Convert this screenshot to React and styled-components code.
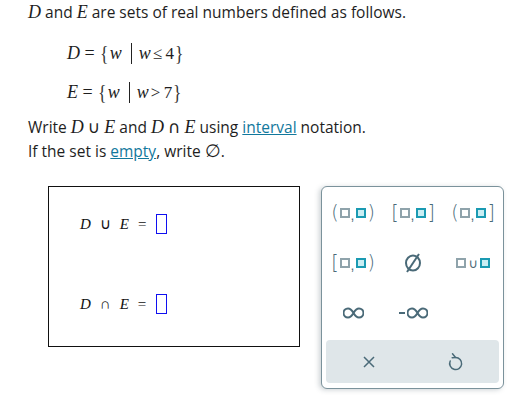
import React from "react";
import styled, { createGlobalStyle } from "styled-components";

const Global = createGlobalStyle`
  body {
    margin: 0;
    background: #fff;
    font-family: "Open Sans", "Liberation Sans", sans-serif;
    color: #1e1e1e;
  }
`;

const Page = styled.div`
  width: 521px;
  height: 407px;
  padding: 0 0 0 28px;
  box-sizing: border-box;
`;

const Line = styled.p`
  margin: 0;
  font-size: 15.5px;
  line-height: 24px;
`;

const M = styled.span`
  font-family: "Liberation Serif", serif;
  font-style: ${(p) => (p.$up ? "normal" : "italic")};
  font-size: 18px;
`;

const Op = styled.span`
  font-family: "DejaVu Sans", sans-serif;
  font-size: 17px;
`;

const Defs = styled.div`
  margin: 18px 0 0 39px;
  display: flex;
  flex-direction: column;
  gap: 16px;
`;

const Def = styled.div`
  display: flex;
  align-items: center;
  height: 23px;
  font-family: "Liberation Serif", serif;
  font-size: 17px;
`;

const Brace = styled.span`
  font-size: 22px;
  color: #333;
  line-height: 1;
  transform: scaleX(0.8);
  margin-top: -2px;
`;

const Bar = styled.span`
  display: inline-block;
  width: 1px;
  height: 21px;
  background: #222;
  margin: 0 7px 0 9px;
`;

const Rel = styled.span`
  font-family: "Liberation Serif", serif;
  margin-left: 2px;
`;

const Prompt = styled.div`
  margin-top: 11px;
`;

const Link = styled.a`
  color: #12789c;
  text-decoration: underline;
`;

const Work = styled.div`
  display: flex;
  align-items: flex-start;
  margin: 23px 0 0 20px;
  gap: 21px;
`;

const AnswerBox = styled.div`
  width: 252px;
  height: 161px;
  box-sizing: border-box;
  border: 1px solid #111;
  padding: 27px 0 0 31px;
  display: flex;
  flex-direction: column;
  gap: 60px;
`;

const Eq = styled.div`
  display: flex;
  align-items: center;
  height: 20px;
  font-family: "Liberation Serif", serif;
  font-size: 15px;
  color: #111;
`;

const Sym = styled.span`
  font-style: ${(p) => (p.$it ? "italic" : "normal")};
  margin-right: ${(p) => p.$mr || 9}px;
`;

const Slot = styled.span`
  display: inline-block;
  width: 11px;
  height: 20px;
  box-sizing: border-box;
  border: 1px solid #1010f0;
`;

const Palette = styled.div`
  width: 183px;
  height: 203px;
  box-sizing: border-box;
  border: 1px solid #7b929b;
  border-radius: 6px;
  box-shadow: -2px 1px 5px rgba(60, 80, 90, 0.25);
  padding: 1px 4px 5px 4px;
  display: flex;
  flex-direction: column;
  background: #fff;
`;

const Grid = styled.div`
  display: grid;
  grid-template-columns: repeat(3, 60px);
  grid-auto-rows: 50px;
  margin-left: -3px;
`;

const Key = styled.div`
  display: flex;
  align-items: center;
  justify-content: center;
  color: #4a6a78;
  font-family: "Liberation Sans", sans-serif;
`;

const Bracket = styled.span`
  font-size: 19px;
  line-height: 1;
  color: #4a6a78;
  font-family: "DejaVu Sans", sans-serif;
  font-weight: 300;
  margin-top: -2px;
`;

const Box = styled.span`
  display: inline-block;
  width: 10px;
  height: 10px;
  box-sizing: border-box;
  border: 2px solid ${(p) => (p.$on ? "#1a9ab2" : "#8fa3ab")};
  background: ${(p) => (p.$on ? "#c9eef4" : "#fff")};
  margin: 0 1px;
`;

const Comma = styled.span`
  font-size: 14px;
  margin: 3px 1px 0 0;
  color: #4a6a78;
`;

const Cup = styled.span`
  font-size: 13px;
  margin: 0 1px;
  color: #4a6a78;
  font-family: "DejaVu Sans", sans-serif;
`;

const Minus = styled.span`
  display: inline-block;
  width: 6px;
  height: 2px;
  background: #4a6a78;
  margin-right: 2px;
`;

const Actions = styled.div`
  margin-top: auto;
  height: 43px;
  background: #dfe6e9;
  border-radius: 4px;
  display: grid;
  grid-template-columns: 86px 86px;
  align-items: center;
  justify-items: center;
`;

const Interval = ({ l, r }) => (
  <Key>
    <Bracket>{l}</Bracket>
    <Box />
    <Comma>,</Comma>
    <Box $on />
    <Bracket>{r}</Bracket>
  </Key>
);

const EmptySet = () => (
  <svg width="20" height="22" viewBox="0 0 20 22">
    <ellipse cx="10" cy="11" rx="7" ry="7.5" fill="none" stroke="#4a6a78" strokeWidth="2" />
    <line x1="16" y1="2" x2="4" y2="20" stroke="#4a6a78" strokeWidth="2" />
  </svg>
);

const Infinity = () => (
  <svg width="21" height="12" viewBox="0 0 21 12">
    <path
      d="M10.5 6 C8.5 2.5 6.5 1.5 5 1.5 A4.5 4.5 0 0 0 5 10.5 C6.5 10.5 8.5 9.5 10.5 6 C12.5 2.5 14.5 1.5 16 1.5 A4.5 4.5 0 0 1 16 10.5 C14.5 10.5 12.5 9.5 10.5 6 Z"
      fill="none"
      stroke="#4a6a78"
      strokeWidth="2"
    />
  </svg>
);

const Times = () => (
  <svg width="14" height="14" viewBox="0 0 14 14">
    <path d="M2 2 L12 12 M12 2 L2 12" stroke="#4a6a78" strokeWidth="1.5" fill="none" />
  </svg>
);

const Undo = () => (
  <svg width="16" height="19" viewBox="0 0 16 19">
    <path
      d="M8.5 5.5 A6 6 0 1 1 3.2 9"
      stroke="#4a6a78"
      strokeWidth="1.5"
      fill="none"
      strokeLinecap="round"
    />
    <path
      d="M5.5 1.8 L8.5 5.5 L5.2 5.8"
      stroke="#4a6a78"
      strokeWidth="1.5"
      fill="none"
      strokeLinecap="round"
      strokeLinejoin="round"
    />
  </svg>
);

export default function App() {
  return (
    <Page>
      <Global />
      <Line>
        <M>D</M> and <M>E</M> are sets of real numbers defined as follows.
      </Line>
      <Defs>
        <Def>
          <M>D</M>
          <M $up>&nbsp;=&nbsp;</M>
          <Brace>{"{"}</Brace>
          <M>w</M>
          <Bar />
          <M>w</M>
          <Rel>≤&thinsp;4</Rel>
          <Brace>{"}"}</Brace>
        </Def>
        <Def>
          <M>E</M>
          <M $up>&nbsp;=&nbsp;</M>
          <Brace>{"{"}</Brace>
          <M>w</M>
          <Bar />
          <M>w</M>
          <Rel>&gt;&thinsp;7</Rel>
          <Brace>{"}"}</Brace>
        </Def>
      </Defs>
      <Prompt>
        <Line>
          Write <M>D</M> <Op>∪</Op> <M>E</M> and <M>D</M> <Op>∩</Op> <M>E</M> using{" "}
          <Link>interval</Link> notation.
        </Line>
        <Line>
          If the set is <Link>empty</Link>, write <M $up>∅</M>.
        </Line>
      </Prompt>
      <Work>
        <AnswerBox>
          <Eq>
            <Sym $it>D</Sym>
            <Sym>∪</Sym>
            <Sym $it>E</Sym>
            <Sym $mr={10}>=</Sym>
            <Slot />
          </Eq>
          <Eq>
            <Sym $it>D</Sym>
            <Sym>∩</Sym>
            <Sym $it>E</Sym>
            <Sym $mr={10}>=</Sym>
            <Slot />
          </Eq>
        </AnswerBox>
        <Palette>
          <Grid>
            <Interval l="(" r=")" />
            <Interval l="[" r="]" />
            <Interval l="(" r="]" />
            <Interval l="[" r=")" />
            <Key>
              <EmptySet />
            </Key>
            <Key>
              <Box />
              <Cup>∪</Cup>
              <Box $on />
            </Key>
            <Key>
              <Infinity />
            </Key>
            <Key>
              <Minus />
              <Infinity />
            </Key>
          </Grid>
          <Actions>
            <Times />
            <Undo />
          </Actions>
        </Palette>
      </Work>
    </Page>
  );
}
